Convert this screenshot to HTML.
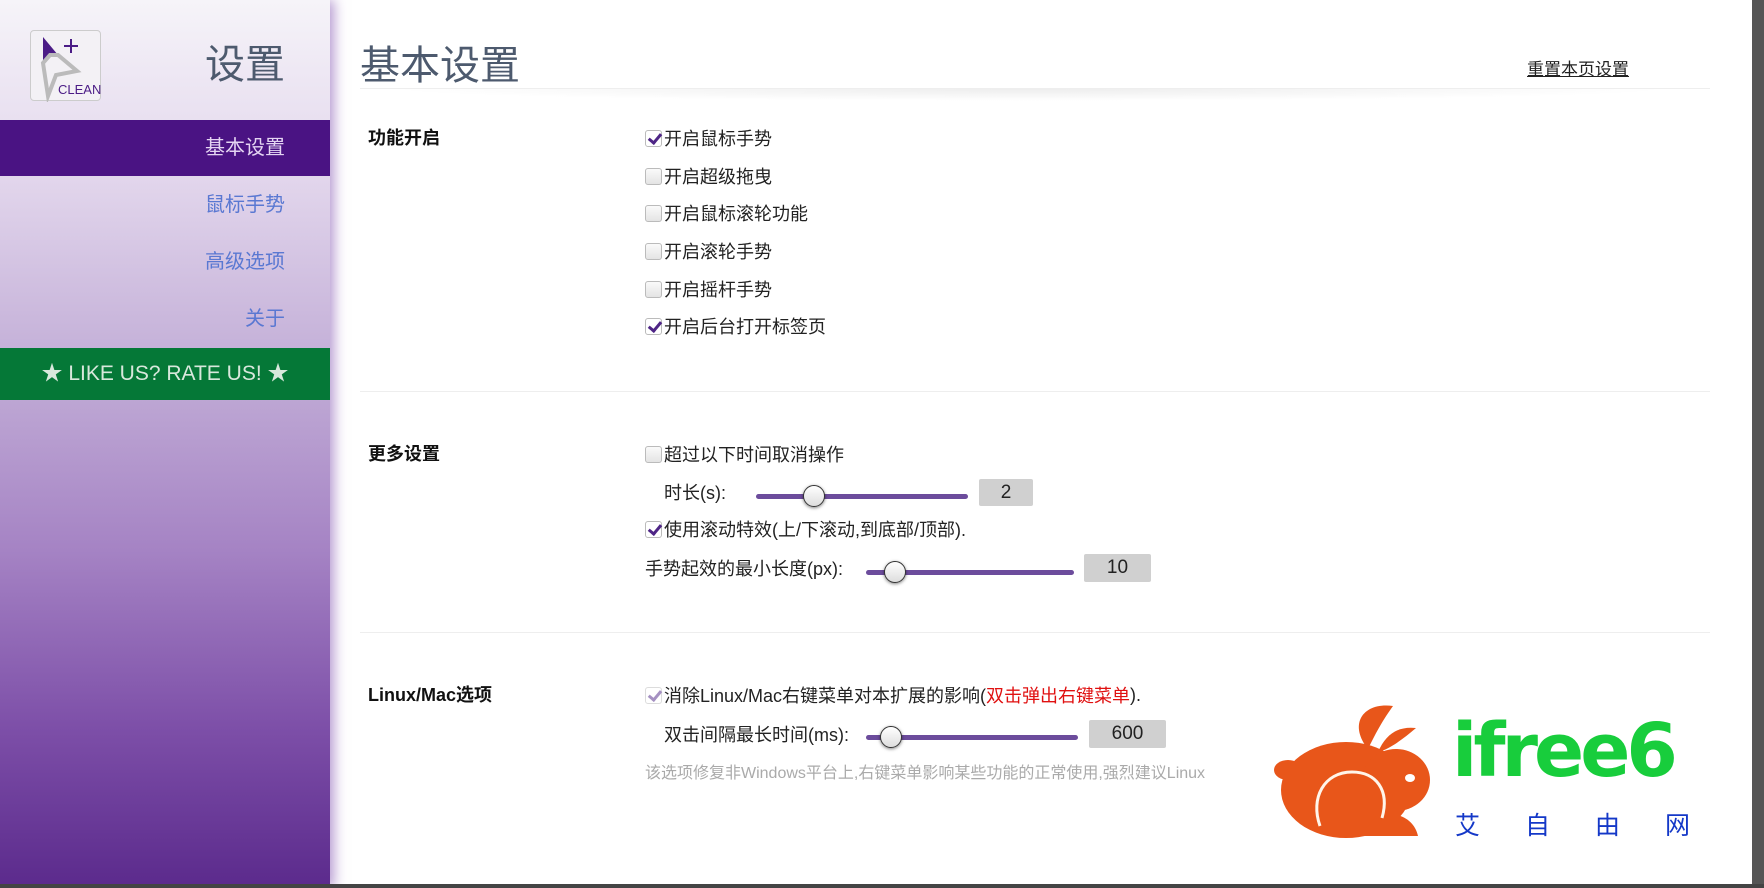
<!DOCTYPE html>
<html><head><meta charset="utf-8"><style>
*{margin:0;padding:0;box-sizing:border-box}
body{width:1764px;height:888px;overflow:hidden;background:#fff;font-family:"Liberation Sans","Noto Sans CJK SC",sans-serif;position:relative}
.a{position:absolute;white-space:nowrap}
#side{position:absolute;left:0;top:0;width:330px;height:888px;background:linear-gradient(#f6f4f9 0%,#e2d6ec 20%,#c4b0d8 40%,#a583c4 62%,#7d4fa8 82%,#5b2a8c 100%);box-shadow:4px 0 12px rgba(120,70,170,.55)}
.nav{position:absolute;left:0;width:330px;height:56px;text-align:right;padding-right:45px;font-size:20px;line-height:56px;color:#5a78d2}
.row{position:absolute;left:645px;font-size:18px;color:#222;display:flex;align-items:center;height:24px}
.cb{width:17px;height:17px;border:1px solid #bbb;border-radius:3px;background:linear-gradient(#fafafa,#e4e4e4);margin-right:2px;position:relative}
.cb.on{background:#fff}
.cb.on:after{content:"";position:absolute;left:5px;top:0px;width:5px;height:10px;border:solid #4e2586;border-width:0 3px 3px 0;transform:rotate(40deg)}
.track{position:absolute;height:5px;background:#6c4c9c;border-radius:3px}
.thumb{position:absolute;width:22px;height:22px;border-radius:50%;border:1.5px solid #333;background:linear-gradient(#fff,#ddd);box-shadow:0 1px 3px rgba(0,0,0,.5)}
.box{position:absolute;background:#d0d0d0;border-radius:2px;font-size:19px;text-align:center;color:#222}
.lbl{position:absolute;left:368px;font-size:18px;font-weight:bold;color:#111}
.hr{position:absolute;left:360px;width:1350px;height:1px;background:#eee}
</style></head><body>
<div id="side">
 <div class="a" style="left:30px;top:30px;width:71px;height:71px;border:1px solid #ccc;border-radius:4px;background:#f3f1f5">
  <svg width="71" height="71" viewBox="0 0 71 71"><path d="M12 6 L12 32 L19 24 L27 24 Z" fill="#4b1c86"/><path d="M12 32 L17 65 L25 44 L46 40 L27 24 L19 24 Z" fill="none" stroke="#bbb" stroke-width="4"/><path d="M40 8v14M33 15h14" stroke="#4b1c86" stroke-width="2"/><text x="27" y="63" font-size="13" fill="#4b1c86" font-family="Liberation Sans Narrow,Liberation Sans,sans-serif">CLEAN</text></svg>
 </div>
 <div class="a" style="right:45px;top:32px;font-size:40px;color:#4d5a6e">设置</div>
 <div class="nav" style="top:120px;background:#4a1383;color:#e4d4f2">基本设置</div>
 <div class="nav" style="top:177px">鼠标手势</div>
 <div class="nav" style="top:234px">高级选项</div>
 <div class="nav" style="top:291px">关于</div>
 <div class="a" style="left:0;top:348px;width:330px;height:52px;background:#057837;color:#d8e8dc;font-size:21px;line-height:52px;text-align:center">★ LIKE US? RATE US! ★</div>
</div>
<div class="a" style="left:360px;top:33px;font-size:40px;color:#4d5a6e">基本设置</div>
<div class="a" style="left:1527px;top:55px;font-size:17px;color:#222;text-decoration:underline">重置本页设置</div>
<div class="hr" style="top:88px"></div>
<div class="a" style="left:380px;top:89px;width:1300px;height:12px;background:radial-gradient(ellipse at top,rgba(0,0,0,.07),transparent 70%)"></div>

<div class="lbl" style="top:124px">功能开启</div>
<div class="row" style="top:126px"><span class="cb on"></span>开启鼠标手势</div>
<div class="row" style="top:164px"><span class="cb"></span>开启超级拖曳</div>
<div class="row" style="top:201px"><span class="cb"></span>开启鼠标滚轮功能</div>
<div class="row" style="top:239px"><span class="cb"></span>开启滚轮手势</div>
<div class="row" style="top:277px"><span class="cb"></span>开启摇杆手势</div>
<div class="row" style="top:314px"><span class="cb on"></span>开启后台打开标签页</div>
<div class="hr" style="top:391px"></div>

<div class="lbl" style="top:440px">更多设置</div>
<div class="row" style="top:442px"><span class="cb"></span>超过以下时间取消操作</div>
<div class="row" style="top:480px;left:664px">时长(s):</div>
<div class="track" style="left:756px;top:494px;width:212px"></div>
<div class="thumb" style="left:803px;top:485px"></div>
<div class="box" style="left:979px;top:479px;width:54px;height:27px;line-height:27px">2</div>
<div class="row" style="top:517px"><span class="cb on"></span>使用滚动特效(上/下滚动,到底部/顶部).</div>
<div class="row" style="top:556px">手势起效的最小长度(px):</div>
<div class="track" style="left:866px;top:570px;width:208px"></div>
<div class="thumb" style="left:884px;top:561px"></div>
<div class="box" style="left:1084px;top:554px;width:67px;height:28px;line-height:28px">10</div>
<div class="hr" style="top:632px"></div>

<div class="lbl" style="top:681px">Linux/Mac选项</div>
<div class="row" style="top:683px"><span class="cb on" style="opacity:.5"></span>消除Linux/Mac右键菜单对本扩展的影响(<span style="color:#e01010">双击弹出右键菜单</span>).</div>
<div class="row" style="top:722px;left:664px">双击间隔最长时间(ms):</div>
<div class="track" style="left:866px;top:735px;width:212px"></div>
<div class="thumb" style="left:880px;top:726px"></div>
<div class="box" style="left:1089px;top:720px;width:77px;height:28px;line-height:28px">600</div>
<div class="a" style="left:645px;top:759px;font-size:16px;color:#aaa">该选项修复非Windows平台上,右键菜单影响某些功能的正常使用,强烈建议Linux</div>

<svg class="a" style="left:1268px;top:694px" width="180" height="150" viewBox="0 0 180 150">
 <ellipse cx="20" cy="76" rx="14" ry="10" fill="#e8561a"/>
 <path d="M100 55 C80 30 95 8 125 12 C112 30 105 45 100 55Z" fill="#e8561a"/>
 <path d="M110 58 C118 40 130 32 148 34 C135 45 122 55 110 58Z" fill="#e8561a"/>
 <ellipse cx="78" cy="96" rx="65" ry="48" fill="#e8561a"/>
 <ellipse cx="128" cy="86" rx="34" ry="31" fill="#e8561a"/>
 <path d="M92 142 L150 142 C146 124 128 116 108 122Z" fill="#e8561a"/>
 <path d="M52 132 C42 104 56 78 84 78 C108 78 122 96 114 124" fill="none" stroke="#fff5ea" stroke-width="3"/>
 <ellipse cx="142" cy="84" rx="5" ry="4" fill="#fff"/>
</svg>
<div class="a" style="left:1452px;top:706px;font-size:74px;font-weight:bold;color:#18cd3c;letter-spacing:-4px;line-height:90px;font-family:'DejaVu Sans','Liberation Sans',sans-serif">ifree6</div>
<div class="a" style="left:1455px;top:806px;font-size:25px;color:#1438c8;letter-spacing:45px">艾自由网</div>
<div class="a" style="left:1752px;top:0;width:12px;height:888px;background:#555"></div>
<div class="a" style="left:0;top:884px;width:1764px;height:4px;background:#444"></div>
</body></html>
